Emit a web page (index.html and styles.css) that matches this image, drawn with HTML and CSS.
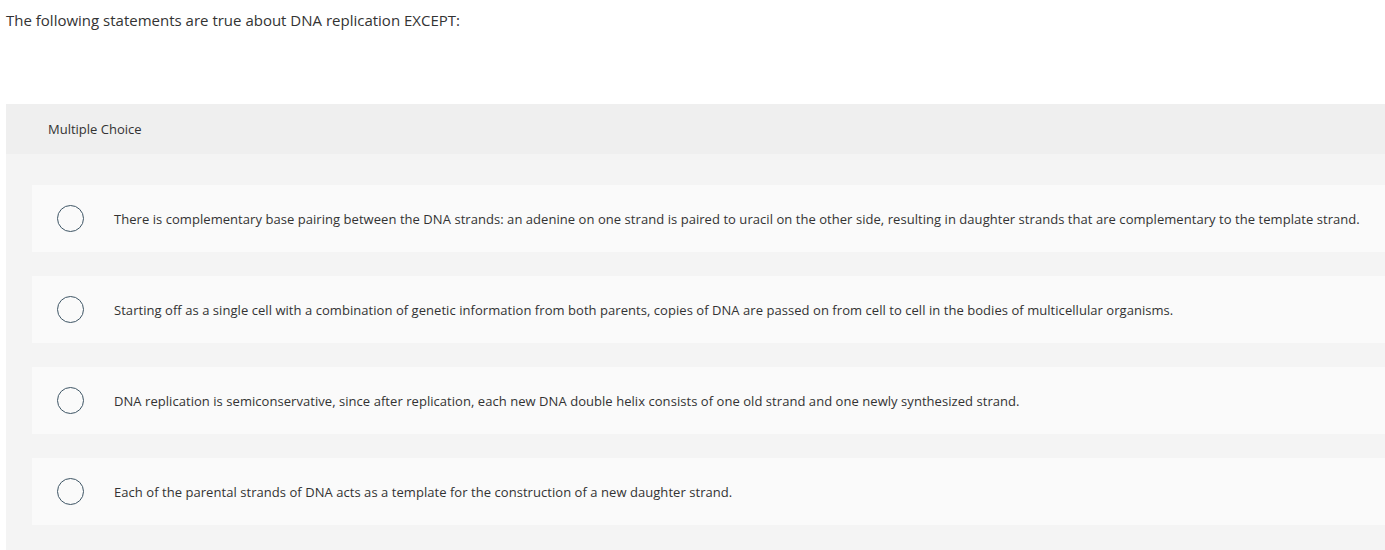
FILE: index.html
```html
<!DOCTYPE html>
<html>
<head>
<meta charset="utf-8">
<link rel="stylesheet" href="styles.css">
</head>
<body>
<div class="page">
  <p class="prompt">The following statements are true about DNA replication EXCEPT:</p>
  <div class="question">
    <div class="q-header">Multiple Choice</div>
    <div class="q-body">
      <div class="choice"><span class="radio"></span><span class="label">There is complementary base pairing between the DNA strands: an adenine on one strand is paired to uracil on the other side, resulting in daughter strands that are complementary to the template strand.</span></div>
      <div class="choice"><span class="radio"></span><span class="label">Starting off as a single cell with a combination of genetic information from both parents, copies of DNA are passed on from cell to cell in the bodies of multicellular organisms.</span></div>
      <div class="choice"><span class="radio"></span><span class="label">DNA replication is semiconservative, since after replication, each new DNA double helix consists of one old strand and one newly synthesized strand.</span></div>
      <div class="choice"><span class="radio"></span><span class="label">Each of the parental strands of DNA acts as a template for the construction of a new daughter strand.</span></div>
    </div>
  </div>
</div>
</body>
</html>
```
FILE: styles.css
```css
html, body {
  margin: 0;
  padding: 0;
  background: #ffffff;
  overflow: hidden;
}
.page {
  padding: 10px 0 0 6px;
  font-family: "Open Sans", "Liberation Sans", sans-serif;
  color: #333333;
}
.prompt {
  margin: 0;
  font-size: 15px;
  line-height: 20px;
  height: 94px;
}
.question {
  width: 1420px;
  background: #f4f4f4;
}
.q-header {
  background: #efefef;
  height: 50px;
  display: flex;
  align-items: center;
  padding-left: 42px;
  font-size: 13px;
}
.q-body {
  padding: 31px 0 25px 26px;
  display: flex;
  flex-direction: column;
  gap: 24px;
}
.choice {
  background: #fafafa;
  height: 67px;
  display: flex;
  align-items: center;
  padding-left: 25px;
}
.radio {
  width: 25px;
  height: 25px;
  border: 1.5px solid #3e5565;
  border-radius: 50%;
  flex: none;
  margin-right: 30px;
}
.label {
  font-size: 13px;
  letter-spacing: 0.05px;
  color: #333333;
}
```
